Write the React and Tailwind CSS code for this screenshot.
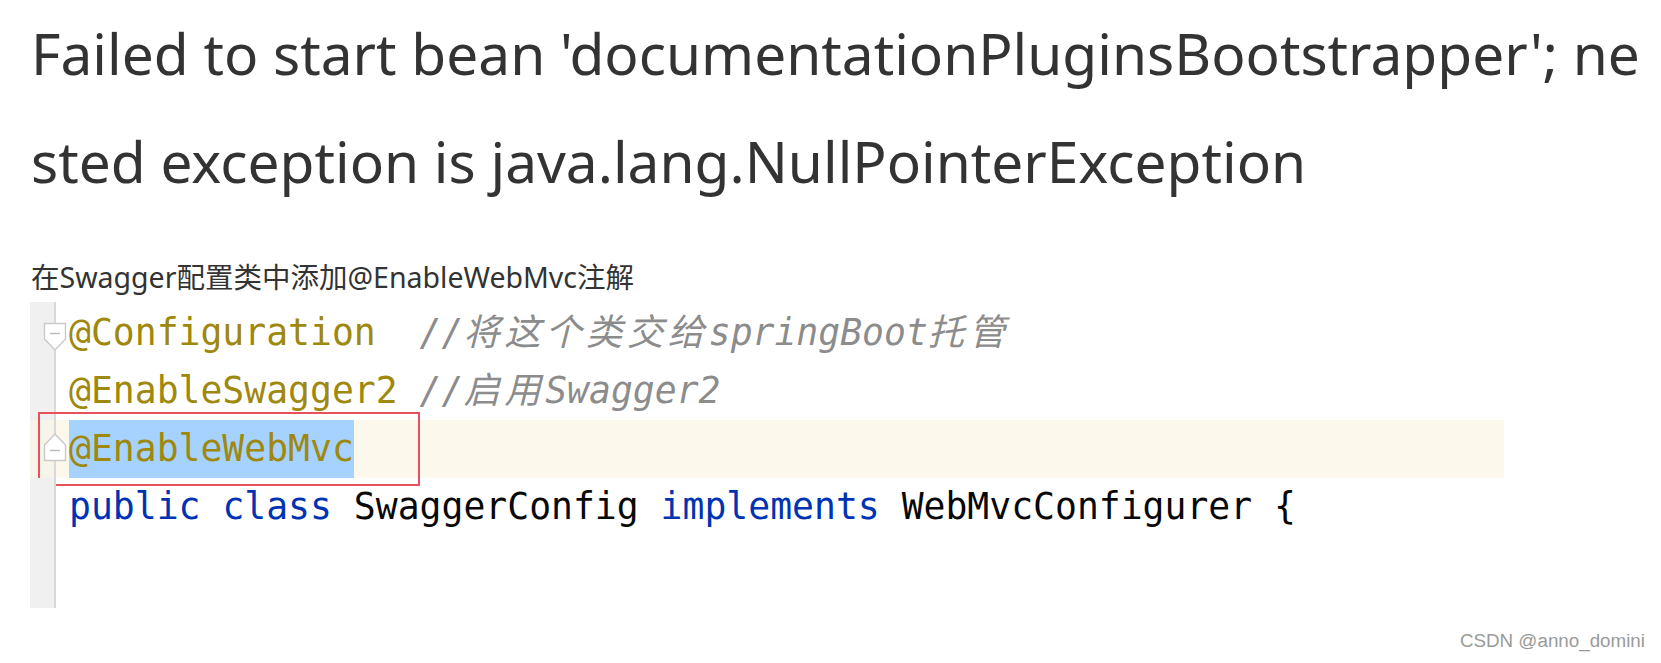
import React from "react";

const ANNOT = "text-[#9e880d]";
const COMMENT = "text-[#8c8c8c] italic";
const KW = "text-[#0033b3]";
const PLAIN = "text-[#080808]";

function FoldStart() {
  return (
    <svg width="24" height="30" viewBox="0 0 24 30" className="absolute left-[-11px] top-[18px]">
      <path d="M1.5 1.5 H22.5 V17 L12 28 L1.5 17 Z" fill="#ffffff" stroke="#c9c9c9" strokeWidth="1.4" />
      <path d="M7 11.5 H17" stroke="#b8b8b8" strokeWidth="1.4" />
    </svg>
  );
}

function FoldEnd() {
  return (
    <svg width="24" height="30" viewBox="0 0 24 30" className="absolute left-[-11px] top-[12px]">
      <path d="M1.5 28.5 H22.5 V13 L12 2 L1.5 13 Z" fill="#ffffff" stroke="#c9c9c9" strokeWidth="1.4" />
      <path d="M7 18.5 H17" stroke="#b8b8b8" strokeWidth="1.4" />
    </svg>
  );
}

function Row({ children, highlight, fold }) {
  return (
    <div className={`relative flex h-[58px] ${highlight ? "bg-[#fcf9ec]" : ""}`}>
      <div className={`w-[24px] shrink-0 ${highlight ? "bg-[#f7f5ea]" : "bg-[#f0f0f0]"}`} />
      <div className="relative w-[2px] shrink-0 bg-[#d9d9d9]">
        {fold === "start" && <FoldStart />}
        {fold === "end" && <FoldEnd />}
      </div>
      <div className="h-full flex-1 whitespace-pre pl-[13px] font-['DejaVu_Sans_Mono','Noto_Sans_CJK_SC',monospace] text-[36.4px] leading-[58px]">
        {children}
      </div>
    </div>
  );
}

export default function App() {
  return (
    <div className="relative h-[663px] w-full overflow-hidden bg-white">
      <h1 className="mt-[-1px] pl-[31px] font-['Noto_Sans','Noto_Sans_CJK_SC',sans-serif] text-[56.8px] font-normal leading-[108px] text-[#333333]">
        <span className="block whitespace-nowrap">Failed to start bean 'documentationPluginsBootstrapper'; ne</span>
        <span className="block whitespace-nowrap">sted exception is java.lang.NullPointerException</span>
      </h1>

      <p className="mt-[42px] pl-[31px] font-['Noto_Sans','Noto_Sans_CJK_SC',sans-serif] text-[28.5px] leading-[40px] text-[#333333]">
        在Swagger配置类中添加@EnableWebMvc注解
      </p>

      <div className="ml-[30px] mt-[5px] w-[1474px]">
        <div className="flex h-[2px]">
          <div className="w-[24px] bg-[#f0f0f0]" />
          <div className="w-[2px] bg-[#d9d9d9]" />
        </div>
        <Row fold="start">
          <span className={ANNOT}>@Configuration</span>
          {"  "}
          <span className={COMMENT}>
            //<span className="tracking-[4.5px]">将这个类交给</span>springBoot<span className="tracking-[4.5px]">托管</span>
          </span>
        </Row>
        <Row>
          <span className={ANNOT}>@EnableSwagger2</span>
          {" "}
          <span className={COMMENT}>
            //<span className="tracking-[4.5px]">启用</span>Swagger2
          </span>
        </Row>
        <Row highlight fold="end">
          <span className={`inline-block h-[58px] bg-[#a6d2ff] align-top ${ANNOT}`}>@EnableWebMvc</span>
          <div className="absolute left-[8px] top-[-8px] h-[74px] w-[382px] border-2 border-[#e8505b]" />
        </Row>
        <Row>
          <span className={KW}>public</span>
          {" "}
          <span className={KW}>class</span>
          {" "}
          <span className={PLAIN}>SwaggerConfig</span>
          {" "}
          <span className={KW}>implements</span>
          {" "}
          <span className={PLAIN}>WebMvcConfigurer {"{"}</span>
        </Row>
        <Row>{" "}</Row>
        <div className="flex h-[14px]">
          <div className="w-[24px] bg-[#f0f0f0]" />
          <div className="w-[2px] bg-[#d9d9d9]" />
        </div>
      </div>

      <div className="absolute right-[16px] top-[632px] font-['Liberation_Sans',Arial,sans-serif] text-[18.8px] leading-[18px] text-[#9a9a9a]">
        CSDN @anno_domini
      </div>
    </div>
  );
}
